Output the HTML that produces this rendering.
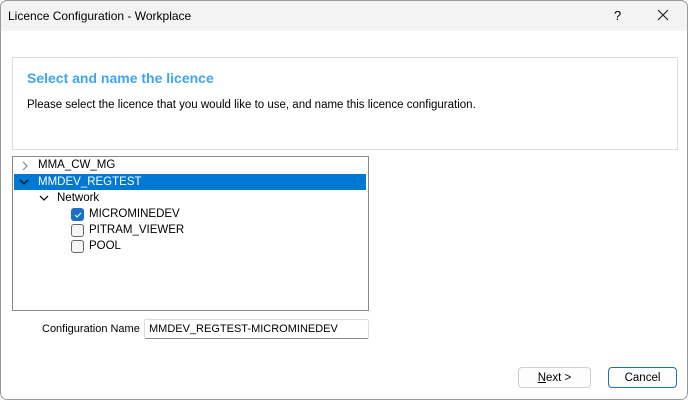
<!DOCTYPE html>
<html><head><style>
*{margin:0;padding:0;box-sizing:border-box}
body{width:688px;height:400px;background:#fff;font-family:"Liberation Sans",sans-serif;font-size:11.5px;color:#000;position:relative;overflow:hidden}
.frame{position:absolute;left:0;top:0;width:688px;height:400px;border:1px solid #9a9a9a;border-radius:7px;z-index:5;pointer-events:none}
.title{position:absolute;left:0;top:0;width:688px;height:31px;background:#f3f3f3;border-radius:7px 7px 0 0}
.abs{position:absolute;white-space:nowrap}
.hdr{position:absolute;left:12px;top:57px;width:666px;height:93px;border:1px solid #dcdcdc}
.tree{position:absolute;left:12px;top:156px;width:357px;height:155px;border:1px solid #8a8a8a}
.sel{position:absolute;left:14px;top:174px;width:352px;height:16px;background:#0078d4}
.cb{position:absolute;width:13px;height:13px;border:1px solid #666;border-radius:3px;background:#f6f6f6}
.btn{position:absolute;height:21px;border:1px solid #cfcfcf;border-radius:4px;background:#fdfdfd;text-align:center;line-height:19px}
</style></head><body>
<div class="title"></div>
<div class="frame"></div>
<div class="abs" style="left:8px;top:9px;font-size:12px">Licence Configuration - Workplace</div>
<div class="abs" style="left:614px;top:8px;font-size:13px">?</div>
<svg class="abs" style="left:657px;top:9px" width="12" height="12"><path d="M1 1L11 11M11 1L1 11" stroke="#222" stroke-width="1.2"/></svg>
<div class="hdr"></div>
<div class="abs" style="left:27px;top:70px;font-size:14px;font-weight:bold;color:#3da5f4">Select and name the licence</div>
<div class="abs" style="left:27px;top:99px">Please select the licence that you would like to use, and name this licence configuration.</div>
<div class="tree"></div>
<div class="sel"></div>
<svg class="abs" style="left:21px;top:161px" width="8" height="10"><path d="M2 1L6 5L2 9" stroke="#888" fill="none" stroke-width="1.2"/></svg>
<div class="abs" style="left:38px;top:159px">MMA_CW_MG</div>
<svg class="abs" style="left:19px;top:178px" width="10" height="8"><path d="M1 2L5 6L9 2" stroke="#111" fill="none" stroke-width="1.3"/></svg>
<div class="abs" style="left:38px;top:176px;color:#fff">MMDEV_REGTEST</div>
<svg class="abs" style="left:39px;top:194px" width="10" height="8"><path d="M1 2L5 6L9 2" stroke="#111" fill="none" stroke-width="1.3"/></svg>
<div class="abs" style="left:57px;top:192px">Network</div>
<div class="cb" style="left:71px;top:208px;background:#1a6fc9;border-color:#1a6fc9"></div>
<svg class="abs" style="left:73px;top:210px" width="10" height="10"><path d="M2 5L4 7L8 3" stroke="#fff" fill="none" stroke-width="1"/></svg>
<div class="abs" style="left:89px;top:208px">MICROMINEDEV</div>
<div class="cb" style="left:71px;top:224px"></div>
<div class="abs" style="left:89px;top:224px">PITRAM_VIEWER</div>
<div class="cb" style="left:71px;top:240px"></div>
<div class="abs" style="left:89px;top:240px">POOL</div>
<div class="abs" style="left:42px;top:323px;font-size:11px">Configuration Name</div>
<div class="abs" style="left:144px;top:319px;width:225px;height:20px;border:1px solid #dcdcdc;border-bottom-color:#888;border-radius:2px"></div>
<div class="abs" style="left:149px;top:323px;font-size:11px">MMDEV_REGTEST-MICROMINEDEV</div>
<div class="btn" style="left:518px;top:367px;width:73px;line-height:20px"><u>N</u>ext &gt;</div>
<div class="btn" style="left:608px;top:367px;width:69px;border-color:#1a6fc9;line-height:20px">Cancel</div>
</body></html>
